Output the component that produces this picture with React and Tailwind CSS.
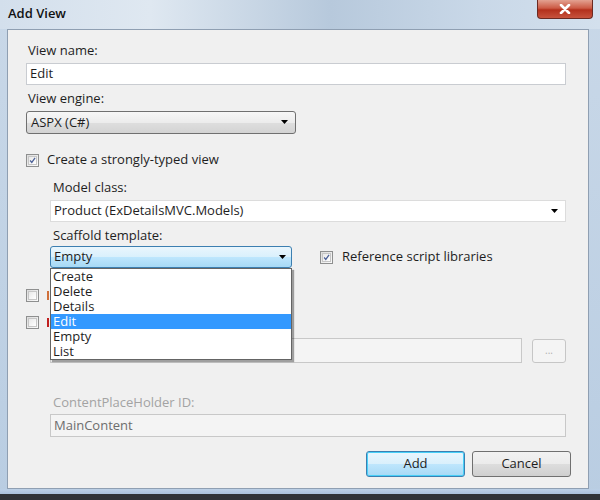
import React from 'react';

const FONT = { fontFamily: '"Segoe UI", "Open Sans", "Noto Sans", sans-serif' };

function Check({ checked }) {
  return (
    <span className="w-[13px] h-[13px] border border-[#8e8f8f] bg-[linear-gradient(135deg,#dcdcdc,#fbfbfb)] flex items-center justify-center shrink-0">
      <span className="w-[9px] h-[9px] border border-[#c6c6c6] bg-[linear-gradient(135deg,#e8e8e8,#ffffff)] flex items-center justify-center">
        {checked && (
          <svg width="9" height="9" viewBox="0 0 9 9">
            <path d="M1.5 4.5 L3.6 7 L7.8 1.2" fill="none" stroke="#4a5f97" strokeWidth="1.6" />
          </svg>
        )}
      </span>
    </span>
  );
}

function Arrow() {
  return (
    <svg width="8" height="5" viewBox="0 0 8 5" className="shrink-0">
      <path d="M0 0 H7 L3.5 4 Z" fill="#000" />
    </svg>
  );
}

const ITEMS = ['Create', 'Delete', 'Details', 'Edit', 'Empty', 'List'];

export default function App() {
  return (
    <div
      className="w-[600px] h-[500px] overflow-hidden bg-[linear-gradient(to_bottom,#c9d8e8,#b9cde2)] text-[13px] text-[#1e1e1e] flex flex-col"
      style={FONT}
    >
      {/* Title bar */}
      <div className="h-[29px] flex items-start justify-between bg-[linear-gradient(90deg,#d3dfec_0%,#dfe8f1_25%,#b7c9dc_55%,#c9d8e8_80%,#d3e0ed_100%)]">
        <span className="mt-[4px] ml-[8px] text-[13px] font-semibold text-[#111]">Add View</span>
        <div className="mr-[7px] w-[56px] h-[19px] rounded-b-[4px] border border-t-0 border-[#6b2a22] bg-[linear-gradient(to_bottom,#e3a291,#cc5b45_45%,#b3301c_55%,#c7533d)] flex items-center justify-center">
          <svg width="12" height="10" viewBox="0 0 12 10">
            <path d="M2 1 L10 9 M10 1 L2 9" stroke="#fff" strokeWidth="2.6" strokeLinecap="round" />
          </svg>
        </div>
      </div>

      {/* Client area */}
      <div className="ml-[7px] mr-[11px] h-[460px] border border-[#8f9fb2] bg-[#f0f0f0] flex flex-col pl-[18px] pr-[22px]">
        <div className="mt-[11px] h-[18px] leading-[18px] pl-[2px]">View name:</div>
        <div className="mt-[4px] h-[22px] border border-[#c9ccd1] bg-white flex items-center pl-[3px]">Edit</div>

        <div className="mt-[4px] h-[18px] leading-[18px] pl-[2px]">View engine:</div>
        <div className="mt-[4px] w-[270px] h-[23px] rounded-[3px] border border-[#707070] bg-[linear-gradient(to_bottom,#f7f7f7,#ececec_50%,#dedede_51%,#d3d3d3)] flex items-center justify-between pl-[4px] pr-[6px]">
          <span>ASPX (C#)</span>
          <Arrow />
        </div>

        <div className="mt-[17px] h-[18px] flex items-center gap-[8px]">
          <Check checked />
          <span>Create a strongly-typed view</span>
        </div>

        <div className="pl-[24px] flex flex-col">
          <div className="mt-[9px] h-[18px] leading-[18px] pl-[3px]">Model class:</div>
          <div className="mt-[4px] h-[22px] border border-[#dcdcdc] bg-white flex items-center justify-between pl-[3px] pr-[6px]">
            <span>Product (ExDetailsMVC.Models)</span>
            <Arrow />
          </div>

          <div className="mt-[4px] h-[18px] leading-[18px] pl-[3px]">Scaffold template:</div>
          <div className="mt-[2px] flex items-center">
            <div className="relative w-[242px]">
              <div className="h-[22px] rounded-[3px] border border-[#3c7fb1] bg-[linear-gradient(to_bottom,#eaf6fd,#d9f0fc_50%,#bee6fd_51%,#a7d9f5)] flex items-center justify-between pl-[3px] pr-[4px]">
                <span>Empty</span>
                <Arrow />
              </div>
              <div className="absolute left-0 top-[22px] w-[242px] z-10 bg-white border border-[#646464] shadow-[2px_2px_1px_rgba(0,0,0,0.35)]">
                {ITEMS.map((it) => (
                  <div
                    key={it}
                    className={`h-[15px] leading-[15px] pl-[2px] ${it === 'Edit' ? 'bg-[#3399ff] text-white' : ''}`}
                  >
                    {it}
                  </div>
                ))}
              </div>
            </div>
            <div className="ml-[28px] flex items-center gap-[9px]">
              <Check checked />
              <span>Reference script libraries</span>
            </div>
          </div>
        </div>

        {/* rows hidden behind the open list: only a sliver of each label shows */}
        <div className="mt-[18px] h-[18px] flex items-center gap-[8px]">
          <Check />
          <span className="w-[2px] h-[9px] bg-[#d0703a]"></span>
        </div>
        <div className="mt-[9px] h-[18px] flex items-center gap-[8px]">
          <Check />
          <span className="w-[2px] h-[9px] bg-[#c02020]"></span>
        </div>

        <div className="pl-[24px] mt-[7px] flex items-center gap-[10px]">
          <div className="flex-1 h-[25px] border border-[#c8c8c8] bg-[#f4f4f4]"></div>
          <div className="w-[34px] h-[24px] rounded-[3px] border border-[#c6c6c6] bg-[#f4f4f4] flex items-center justify-center text-[#b0b0b0] text-[10px]">
            ...
          </div>
        </div>

        <div className="pl-[24px] flex flex-col">
          <div className="mt-[30px] h-[18px] leading-[18px] pl-[3px] text-[#a3a3a3]">ContentPlaceHolder ID:</div>
          <div className="mt-[3px] h-[23px] border border-[#c8c8c8] bg-[#f4f4f4] flex items-center pl-[3px] text-[#6d6d6d]">
            MainContent
          </div>
        </div>

        <div className="mt-[14px] -mr-[5px] flex justify-end gap-[7px]">
          <div className="w-[99px] h-[26px] rounded-[3px] border border-[#3c7fb1] bg-[linear-gradient(to_bottom,#eaf6fd,#d9f0fc_50%,#bee6fd_51%,#a7d9f5)] flex items-center justify-center shadow-[inset_0_0_0_1px_#48d0f8]">
            Add
          </div>
          <div className="w-[99px] h-[26px] rounded-[3px] border border-[#707070] bg-[linear-gradient(to_bottom,#f2f2f2,#ebebeb_50%,#dddddd_51%,#cfcfcf)] flex items-center justify-center">
            Cancel
          </div>
        </div>
      </div>

      <div className="h-[5px] bg-[linear-gradient(to_bottom,#bcd0e6,#a9c0da)]"></div>
      <div className="flex-1 bg-[#2f3236]"></div>
    </div>
  );
}
